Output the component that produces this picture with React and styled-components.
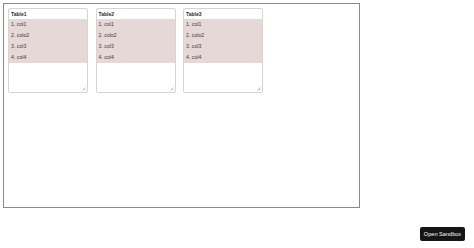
import React from 'react'
import styled, { createGlobalStyle } from 'styled-components'

const GlobalStyle = createGlobalStyle`
	html, body {
		margin: 0;
		padding: 0;
		background: #fff;
		font-family: 'Liberation Sans', Arial, sans-serif;
	}
`

const tables = [
	{ name: 'Table1', cols: ['col1', 'colo2', 'col3', 'col4'] },
	{ name: 'Table2', cols: ['col1', 'colo2', 'col3', 'col4'] },
	{ name: 'Table3', cols: ['col1', 'colo2', 'col3', 'col4'] },
]

const App = () => {
	return (
		<Page>
			<GlobalStyle />
			<Canvas>
				{tables.map((t) => (
					<Table key={t.name}>
						<Title>{t.name}</Title>
						{t.cols.map((c, i) => (
							<Row key={c}>
								{i + 1}. {c}
							</Row>
						))}
						<Grip viewBox='0 0 4 4'>
							<path d='M0.5 3.5 L3.5 0.5 M2 3.5 L3.5 2' stroke='#999' strokeWidth='0.6' />
						</Grip>
					</Table>
				))}
			</Canvas>
			<SandboxButton>Open Sandbox</SandboxButton>
		</Page>
	)
}

const Page = styled.div`
	position: relative;
	width: 474px;
	height: 248px;
	padding: 3px;
	box-sizing: border-box;
`

const Canvas = styled.div`
	width: 357px;
	height: 205px;
	box-sizing: border-box;
	border: 1px solid #8a8a8a;
	padding: 4px;
	display: flex;
	align-items: flex-start;
	gap: 7.5px;
`

const Table = styled.div`
	position: relative;
	width: 80px;
	height: 85px;
	box-sizing: border-box;
	border: 1px solid #d4d4d4;
	border-radius: 2px;
	background: #fff;
	display: flex;
	flex-direction: column;
	overflow: hidden;
`

const Title = styled.div`
	height: 10px;
	line-height: 10px;
	padding: 0 2px;
	font-size: 5px;
	font-weight: bold;
	color: #2a2a2a;
`

const Row = styled.div`
	height: 11px;
	line-height: 11px;
	padding: 0 2px;
	font-size: 5.2px;
	color: #3a3a3a;
	background: #e7d8d8;
`

const Grip = styled.svg`
	position: absolute;
	right: 1px;
	bottom: 1px;
	width: 4px;
	height: 4px;
`

const SandboxButton = styled.button`
	position: absolute;
	left: 420px;
	top: 227px;
	width: 45px;
	height: 14px;
	padding: 0;
	border: none;
	border-radius: 2px;
	background: #151515;
	color: #fff;
	font-family: 'Liberation Sans', Arial, sans-serif;
	font-size: 5.6px;
`

export default App
